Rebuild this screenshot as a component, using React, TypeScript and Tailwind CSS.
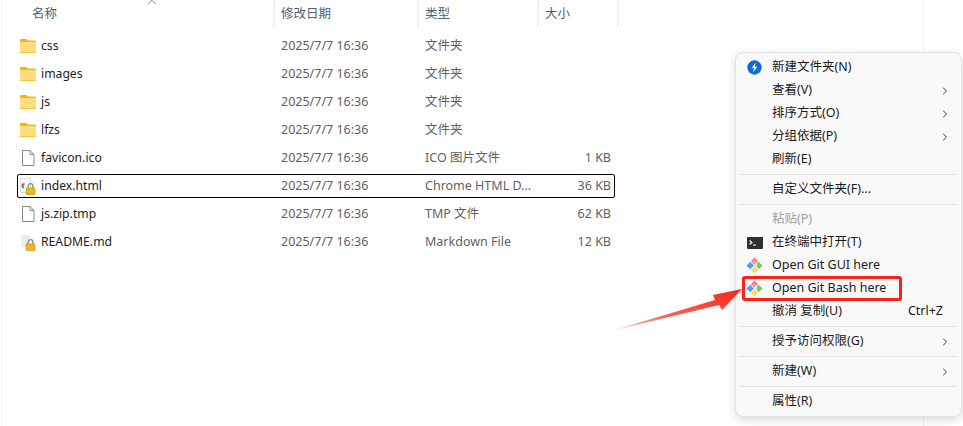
import { ChevronRight, ChevronUp } from "lucide-react";

const font = "font-['Noto_Sans','Noto_Sans_CJK_SC',sans-serif]";

interface FileRow {
  name: string;
  type: string;
  size?: string;
  icon: "folder" | "file" | "chrome" | "md";
}

const files: FileRow[] = [
  { name: "css", type: "文件夹", icon: "folder" },
  { name: "images", type: "文件夹", icon: "folder" },
  { name: "js", type: "文件夹", icon: "folder" },
  { name: "lfzs", type: "文件夹", icon: "folder" },
  { name: "favicon.ico", type: "ICO 图片文件", size: "1 KB", icon: "file" },
  { name: "index.html", type: "Chrome HTML D...", size: "36 KB", icon: "chrome" },
  { name: "js.zip.tmp", type: "TMP 文件", size: "62 KB", icon: "file" },
  { name: "README.md", type: "Markdown File", size: "12 KB", icon: "md" },
];

function FolderIcon() {
  return (
    <svg width="16" height="16" viewBox="0 0 16 16">
      <path d="M0 2.500C0 1.700.6 1 1.400 1h4.200c.4 0 .7.2 1 .4L8 3H0z" fill="#f5b000" />
      <rect x="0" y="2.600" width="16" height="12.400" rx="1.200" fill="#f7b90f" />
      <rect x="0" y="4" width="16" height="10.200" rx="1" fill="#fedd7c" />
    </svg>
  );
}

function FileIcon() {
  return (
    <svg width="14" height="16" viewBox="0 0 14 16">
      <path d="M1.500.5h7.500l4 4v11h-11.500z" fill="#fff" stroke="#8a8a8a" strokeLinejoin="round" />
      <path d="M9 .5v4h4" fill="none" stroke="#8a8a8a" />
    </svg>
  );
}

function LockIcon() {
  return (
    <svg width="11" height="12" viewBox="0 0 11 12" className="absolute left-[5px] top-[5px]">
      <path d="M3 5V3.200a2.500 2.500 0 0 1 5 0V5" fill="none" stroke="#8a8a80" strokeWidth="1.300" />
      <rect x="1" y="5" width="9" height="6.500" rx="1" fill="#f2b71d" stroke="#b98a10" strokeWidth=".6" />
    </svg>
  );
}

function RowIcon({ icon }: { icon: FileRow["icon"] }) {
  if (icon === "folder") return <FolderIcon />;
  if (icon === "file") return <FileIcon />;
  return (
    <div className="relative w-4 h-4">
      {icon === "chrome" ? (
        <svg width="12" height="15" viewBox="0 0 12 15" className="absolute left-0 top-0">
          <rect x=".5" y=".5" width="10" height="14" fill="#fbfbfb" stroke="#dddddd" />
          <path d="M1.500 8a3 3 0 0 1 3-3v2a1 1 0 0 0-1 1z" fill="#d9483b" />
          <path d="M1.500 8a3 3 0 0 0 2 2.800l.8-1.900a1 1 0 0 1-.8-.9z" fill="#3aa757" />
        </svg>
      ) : (
        <svg width="9" height="12" viewBox="0 0 9 12" className="absolute left-[1px] top-[1px]">
          <rect x="0" y="0" width="9" height="12" fill="#ececec" />
        </svg>
      )}
      <LockIcon />
    </div>
  );
}

function GitIcon() {
  return (
    <svg width="17" height="17" viewBox="0 0 17 17">
      <path d="M8.500.5l3.600 3.600-3.600 3.600-3.600-3.600z" fill="#f0818a" />
      <path d="M12.700 4.700l3.800 3.800-3.800 3.800-3.600-3.800z" fill="#7cc95f" />
      <path d="M8.500 9.300l3.600 3.600-3.600 3.600-3.600-3.600z" fill="#fbd96b" />
      <path d="M4.300 4.700l3.600 3.800-3.600 3.800L.5 8.500z" fill="#5c9be8" />
      <path d="M7.500 4l3 3M10.500 7v2.500" stroke="#ffffff" strokeWidth=".8" fill="none" />
    </svg>
  );
}

function NewFolderIcon() {
  return (
    <svg width="15" height="15" viewBox="0 0 15 15">
      <circle cx="7.500" cy="7.500" r="7.200" fill="#0f6cd0" />
      <path d="M8.600 2.800L4.600 8h2.300l-.8 4.200 4.200-5.400H7.900z" fill="#ffffff" />
    </svg>
  );
}

function TerminalIcon() {
  return (
    <svg width="16" height="12" viewBox="0 0 16 12">
      <rect width="16" height="12" rx="1" fill="#2f2f2f" />
      <path d="M2.500 3.500l2.500 2-2.500 2" stroke="#fff" strokeWidth="1.100" fill="none" />
      <path d="M6 8h3" stroke="#fff" strokeWidth="1.100" />
    </svg>
  );
}

function MenuItem({
  label,
  icon,
  arrow,
  shortcut,
  disabled,
}: {
  label: string;
  icon?: React.ReactNode;
  arrow?: boolean;
  shortcut?: string;
  disabled?: boolean;
}) {
  return (
    <div className={`h-[23px] flex items-center text-[12.5px] ${disabled ? "text-[#a0a0a0]" : "text-[#1a1a1a]"}`}>
      <div className="w-[32px] flex justify-center pr-[3px] shrink-0">{icon}</div>
      <span className="flex-1 whitespace-nowrap">{label}</span>
      {shortcut && <span className="mr-[14px]">{shortcut}</span>}
      {arrow && <ChevronRight className="w-[12px] h-[12px] mr-[6px] text-[#1f1f1f]" strokeWidth={1.75} />}
    </div>
  );
}

function Divider() {
  return <div className="h-px bg-[#e4e4e4] my-[3px]" />;
}

export default function App() {
  return (
    <div className={`relative w-[963px] h-[426px] overflow-hidden bg-white ${font}`}>
      <div className="w-[924px] h-full border-r border-[#f0f0f0]">
        <div className="h-full ml-[1px] border-l border-[#f2f2f2]">
          {/* Header */}
          <div className="relative flex h-[27px] text-[12.5px] text-[#4c607a]">
            <ChevronUp className="absolute left-[143px] top-[-5px] w-[14px] h-[14px] text-[#6b6b6b]" strokeWidth={1.5} />
            <div className="w-[273px] pl-[30px] pt-[5px] border-r-2 border-[#eeeeee]">名称</div>
            <div className="w-[144px] pl-[6px] pt-[5px] border-r-2 border-[#eeeeee]">修改日期</div>
            <div className="w-[120px] pl-[6px] pt-[5px] border-r-2 border-[#eeeeee]">类型</div>
            <div className="w-[80px] pl-[6px] pt-[5px] border-r-2 border-[#eeeeee]">大小</div>
          </div>

          {/* Rows */}
          <div className="pt-[5px]">
            {files.map((f) => (
              <div key={f.name} className="h-[28px] flex items-center">
                <div
                  className={`flex items-center h-[24px] w-[598px] ml-[15px] text-[12.5px] rounded-[2px] border ${
                    f.name === "index.html" ? "border-black" : "border-transparent"
                  }`}
                >
                  <div className="w-[23px] pr-[3px] flex justify-center shrink-0">
                    <RowIcon icon={f.icon} />
                  </div>
                  <div className="w-[240px] text-[12.2px] text-[#1a1a1a]">{f.name}</div>
                  <div className="w-[144px] text-[#5f5f5f]">2025/7/7 16:36</div>
                  <div className="w-[120px] text-[#5f5f5f] whitespace-nowrap overflow-hidden">{f.type}</div>
                  <div className="w-[66px] text-right text-[#5f5f5f]">{f.size}</div>
                </div>
              </div>
            ))}
          </div>
        </div>
      </div>

      {/* Context menu */}
      <div className="absolute left-[735px] top-[52px] w-[227px] h-[365px] bg-[#f9f9f9] border border-[#e2e2e2] rounded-[8px] shadow-[0_3px_10px_rgba(0,0,0,0.14)] px-[4px] pt-[3px]">
        <MenuItem label="新建文件夹(N)" icon={<NewFolderIcon />} />
        <MenuItem label="查看(V)" arrow />
        <MenuItem label="排序方式(O)" arrow />
        <MenuItem label="分组依据(P)" arrow />
        <MenuItem label="刷新(E)" />
        <Divider />
        <MenuItem label="自定义文件夹(F)..." />
        <Divider />
        <MenuItem label="粘贴(P)" disabled />
        <MenuItem label="在终端中打开(T)" icon={<TerminalIcon />} />
        <MenuItem label="Open Git GUI here" icon={<GitIcon />} />
        <MenuItem label="Open Git Bash here" icon={<GitIcon />} />
        <MenuItem label="撤消 复制(U)" shortcut="Ctrl+Z" />
        <Divider />
        <MenuItem label="授予访问权限(G)" arrow />
        <Divider />
        <MenuItem label="新建(W)" arrow />
        <Divider />
        <MenuItem label="属性(R)" />
      </div>

      {/* Red annotation */}
      <div className="absolute left-[742px] top-[276px] w-[160px] h-[25px] border-[3px] border-[#f8221a] rounded-[3px]" />
      <svg width="140" height="50" viewBox="0 0 140 50" className="absolute left-[608px] top-[285px]">
        <defs>
          <linearGradient id="arrowFill" x1="0" y1="1" x2="1" y2="0">
            <stop offset="0" stopColor="#fde0d8" />
            <stop offset="0.35" stopColor="#fb6a58" />
            <stop offset="1" stopColor="#f8221a" />
          </linearGradient>
        </defs>
        <polygon points="3,46 107,15 105,10 134,4 114,25 111,20" fill="url(#arrowFill)" />
      </svg>
    </div>
  );
}
